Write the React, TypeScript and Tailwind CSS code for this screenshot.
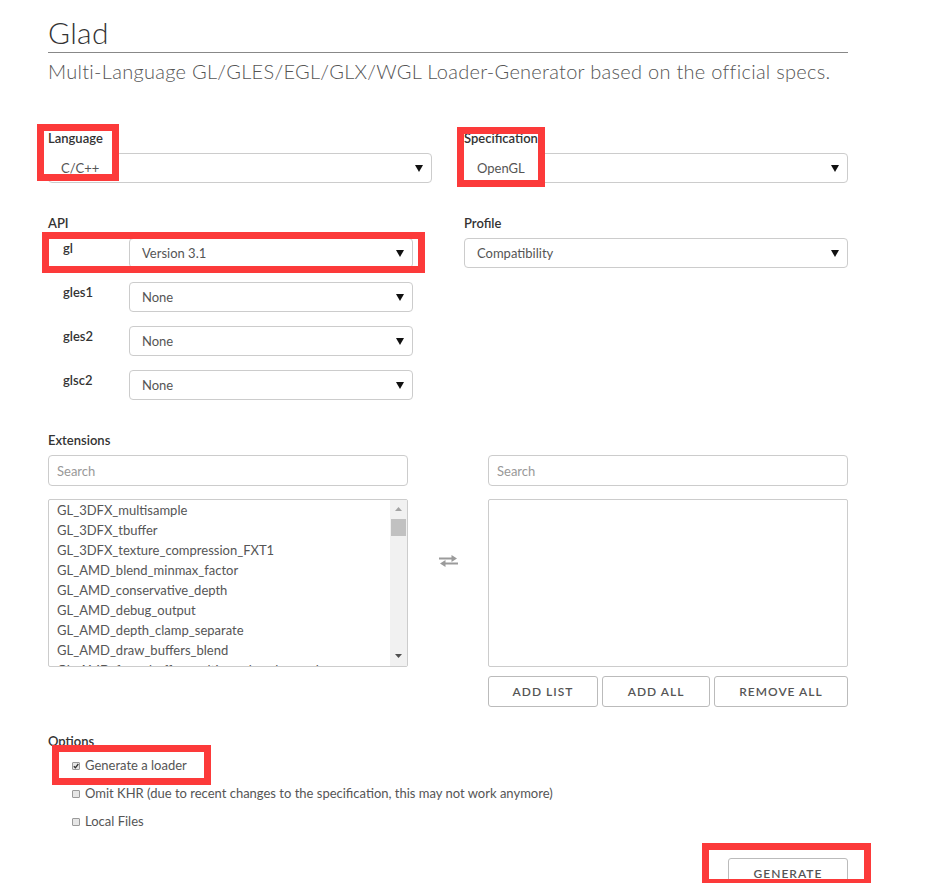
import React from 'react';

const EXTENSIONS = [
  'GL_3DFX_multisample',
  'GL_3DFX_tbuffer',
  'GL_3DFX_texture_compression_FXT1',
  'GL_AMD_blend_minmax_factor',
  'GL_AMD_conservative_depth',
  'GL_AMD_debug_output',
  'GL_AMD_depth_clamp_separate',
  'GL_AMD_draw_buffers_blend',
  'GL_AMD_framebuffer_multisample_advanced',
];

function Label({ children, className = '' }: { children: React.ReactNode; className?: string }) {
  return (
    <label className={`relative z-[2] block text-[13px] leading-[18px] font-semibold text-[#333] ${className}`}>
      {children}
    </label>
  );
}

function Select({ value, className = '' }: { value: string; className?: string }) {
  return (
    <div className={`flex items-center h-[30px] border border-[#ccc] rounded-[4px] bg-white pl-3 pr-[8px] ${className}`}>
      <span className="relative z-[2] flex-1 pt-[1px] text-[13px] text-[#555]">{value}</span>
      <svg width="8" height="7" viewBox="0 0 8 7" className="shrink-0">
        <path d="M0 0h8L4 7z" fill="#111" />
      </svg>
    </div>
  );
}

function SearchBox() {
  return (
    <input
      readOnly
      placeholder="Search"
      className="block w-full h-[31px] border border-[#ccc] rounded-[4px] px-2 text-[13px] text-[#555] placeholder:text-[#999] outline-none"
    />
  );
}

function Checkbox({ checked, label }: { checked?: boolean; label: string }) {
  return (
    <div className="flex items-center h-5 pl-6 gap-[5px]">
      <span className="flex items-center justify-center w-[8px] h-[8px] border border-[#9a9a9a] rounded-[1px] bg-[#e6e6e6]">
        {checked && (
          <svg width="6" height="6" viewBox="0 0 6 6">
            <path d="M0.8 3.2 2.4 4.8 5.3 1" stroke="#333" strokeWidth="1.3" fill="none" />
          </svg>
        )}
      </span>
      <span className="text-[13px] text-[#555]">{label}</span>
    </div>
  );
}

// Swap arrows between the two extension lists
function SwapIcon() {
  return (
    <svg width="19" height="12" viewBox="0 0 19 12">
      <path d="M0 2.5h12.5V0L18 3.5 12.5 7V4.5H0z" fill="#9b9b9b" />
      <path d="M19 7.5H6.5V5L1 8.5 6.5 12V9.5H19z" fill="#9b9b9b" />
    </svg>
  );
}

function ListBox({ items }: { items: string[] }) {
  return (
    <div className="flex h-[168px] border border-[#ccc] rounded-[2px] overflow-hidden mt-[13px]">
      <div className="flex-1 overflow-hidden">
        {items.map((item) => (
          <div key={item} className="pl-2 text-[13px] leading-[20px] text-[#555] whitespace-nowrap">
            {item}
          </div>
        ))}
      </div>
      {items.length > 0 && (
        <div className="w-[17px] bg-[#f1f1f1] flex flex-col items-center">
          <div className="h-[17px] flex items-center justify-center">
            <svg width="7" height="4" viewBox="0 0 7 4">
              <path d="M0 4 3.5 0 7 4z" fill="#a3a3a3" />
            </svg>
          </div>
          <div className="mt-[2px] w-[15px] h-[17px] bg-[#c1c1c1]" />
          <div className="flex-1" />
          <div className="h-[20px] flex items-center justify-center">
            <svg width="7" height="4" viewBox="0 0 7 4">
              <path d="M0 0h7L3.5 4z" fill="#505050" />
            </svg>
          </div>
        </div>
      )}
    </div>
  );
}

function Button({ children, className = '' }: { children: React.ReactNode; className?: string }) {
  return (
    <button
      type="button"
      className={`h-[31px] border border-[#bbb] rounded-[3px] bg-white text-[12px] font-semibold tracking-[1px] uppercase text-[#555] ${className}`}
    >
      {children}
    </button>
  );
}

function Mark({ className, fill }: { className: string; fill?: boolean }) {
  return (
    <>
      {fill && <div className={`pointer-events-none absolute z-[1] bg-white ${className}`} />}
      <div className={`pointer-events-none absolute z-[3] border-[7px] border-[#fc3a3a] ${className}`} />
    </>
  );
}

export default function App() {
  return (
    <div className="relative h-[883px] overflow-hidden bg-white font-['Lato',sans-serif] text-[#555]">
      <div className="ml-12 w-[800px] pt-[14px]">
        <h1 className="text-[30px] leading-[36px] font-light tracking-[0.3px] text-[#333]">Glad</h1>
        <div className="mt-[2px] h-px bg-[#888]" />
        <p className="mt-[6px] text-[20px] leading-[24px] font-light tracking-[0.28px] text-[#555]">
          Multi-Language GL/GLES/EGL/GLX/WGL Loader-Generator based on the official specs.
        </p>

        <div className="mt-[46px] grid grid-cols-2 gap-x-8">
          <div>
            <Label className="mb-[6px]">Language</Label>
            <Select value="C/C++" />
          </div>
          <div>
            <Label className="mb-[6px]">Specification</Label>
            <Select value="OpenGL" />
          </div>
        </div>

        <div className="mt-[31px] grid grid-cols-2 gap-x-8">
          <div>
            <Label className="mb-[6px]">API</Label>
            <div className="flex flex-col gap-[14px]">
              {[
                ['gl', 'Version 3.1'],
                ['gles1', 'None'],
                ['gles2', 'None'],
                ['glsc2', 'None'],
              ].map(([api, v]) => (
                <div key={api} className="flex">
                  <div className="w-[81px] pl-[15px] pt-[1px] text-[13px] leading-[18px] font-semibold text-[#333]">{api}</div>
                  <Select value={v} className="w-[284px]" />
                </div>
              ))}
            </div>
          </div>
          <div>
            <Label className="mb-[6px]">Profile</Label>
            <Select value="Compatibility" />
          </div>
        </div>

        <Label className="mt-[31px] mb-[6px]">Extensions</Label>
        <div className="grid grid-cols-[360px_80px_360px]">
          <div>
            <SearchBox />
            <ListBox items={EXTENSIONS} />
          </div>
          <div className="flex justify-center pt-[100px]">
            <div>
              <SwapIcon />
            </div>
          </div>
          <div>
            <SearchBox />
            <ListBox items={[]} />
            <div className="mt-[9px] flex gap-[4px]">
              <Button className="w-[110px]">Add List</Button>
              <Button className="w-[108px]">Add All</Button>
              <Button className="flex-1">Remove All</Button>
            </div>
          </div>
        </div>

        <Label className="mt-[25px] mb-[6px]">Options</Label>
        <div className="flex flex-col gap-2">
          <Checkbox checked label="Generate a loader" />
          <Checkbox label="Omit KHR (due to recent changes to the specification, this may not work anymore)" />
          <Checkbox label="Local Files" />
        </div>

        <div className="mt-[26px] flex justify-end">
          <Button className="w-[120px] h-[32px]">Generate</Button>
        </div>
      </div>

      <Mark fill className="left-[37px] top-[124px] w-[82px] h-[57px]" />
      <Mark fill className="left-[457px] top-[127px] w-[88px] h-[60px]" />
      <Mark className="left-[42px] top-[232px] w-[383px] h-[41px]" />
      <Mark className="left-[52px] top-[745px] w-[159px] h-[40px]" />
      <Mark className="left-[702px] top-[843px] w-[169px] h-[43px]" />
    </div>
  );
}
